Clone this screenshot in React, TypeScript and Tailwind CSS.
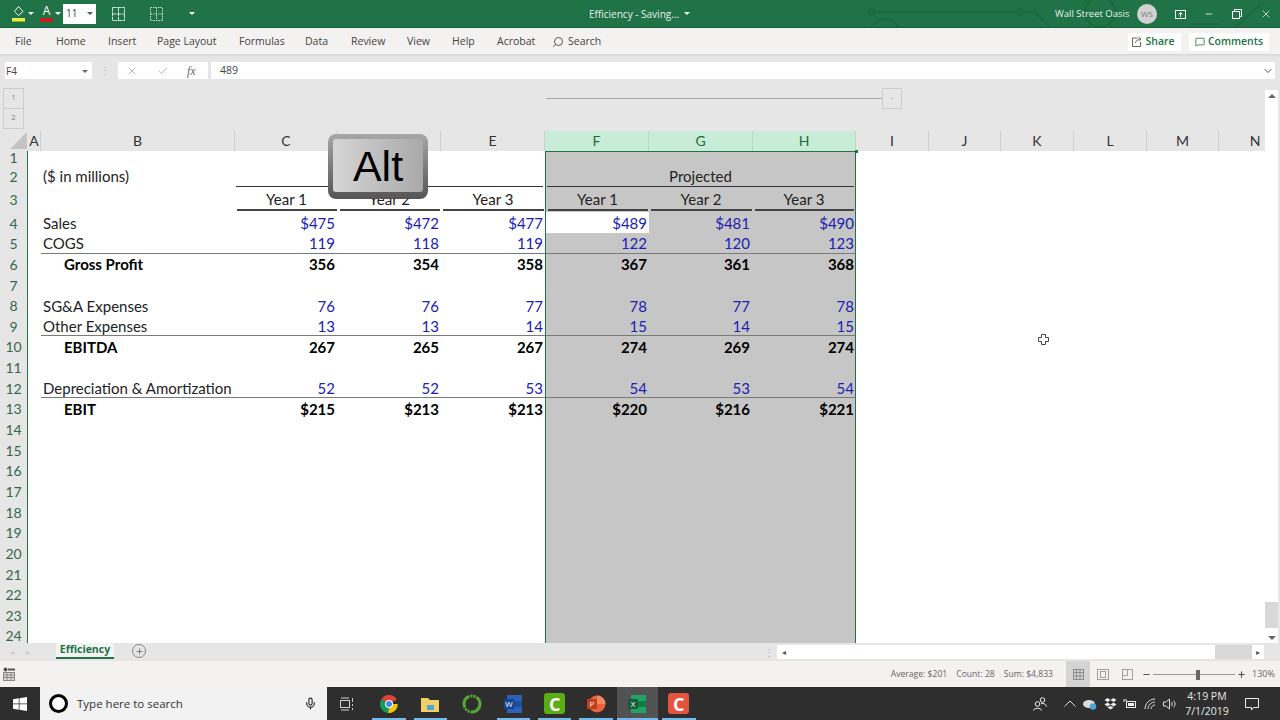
import { Search, X, Check, Minus, Plus, ChevronDown, MessageSquare, Mic } from "lucide-react";

const cols = [
    { name: "A", w: "w-[13px]" },
    { name: "B", w: "w-[194px]" },
    { name: "C", w: "w-[103px]" },
    { name: "D", w: "w-[103px]" },
    { name: "E", w: "w-[104px]" },
    { name: "F", w: "w-[104px]" },
    { name: "G", w: "w-[104px]" },
    { name: "H", w: "w-[103px]" },
    { name: "I", w: "w-[73px]" },
    { name: "J", w: "w-[72px]" },
    { name: "K", w: "w-[73px]" },
    { name: "L", w: "w-[73px]" },
    { name: "M", w: "w-[72px]" },
    { name: "N", w: "w-[73px]" },
];

type Row = {
    n: number;
    h?: string;
    label?: string;
    indent?: boolean;
    bold?: boolean;
    blue?: boolean;
    line?: boolean;
    values?: string[];
};

const rows: Row[] = [
    { n: 1, h: "h-[15px]" },
    { n: 2, h: "h-[21px]" },
    { n: 3, h: "h-[25.3px]" },
    { n: 4, label: "Sales", blue: true, values: ["$475", "$472", "$477", "$489", "$481", "$490"] },
    { n: 5, label: "COGS", blue: true, line: true, values: ["119", "118", "119", "122", "120", "123"] },
    { n: 6, label: "Gross Profit", indent: true, bold: true, values: ["356", "354", "358", "367", "361", "368"] },
    { n: 7 },
    { n: 8, label: "SG&A Expenses", blue: true, values: ["76", "76", "77", "78", "77", "78"] },
    { n: 9, label: "Other Expenses", blue: true, line: true, values: ["13", "13", "14", "15", "14", "15"] },
    { n: 10, label: "EBITDA", indent: true, bold: true, values: ["267", "265", "267", "274", "269", "274"] },
    { n: 11 },
    { n: 12, label: "Depreciation & Amortization", blue: true, line: true, values: ["52", "52", "53", "54", "53", "54"] },
    { n: 13, label: "EBIT", indent: true, bold: true, values: ["$215", "$213", "$213", "$220", "$216", "$221"] },
    { n: 14 }, { n: 15 }, { n: 16 }, { n: 17 }, { n: 18 }, { n: 19 },
    { n: 20 }, { n: 21 }, { n: 22 }, { n: 23 }, { n: 24 },
];

const valueWidths = ["w-[103px]", "w-[103px]", "w-[104px]", "w-[104px]", "w-[104px]", "w-[103px]"];
const valuePads = ["pr-[3px]", "pr-[2px]", "pr-[2px]", "pr-[2px]", "pr-[3px]", "pr-[1px]"];

const tabs = [
    { name: "File", w: "w-[41px]" },
    { name: "Home", w: "w-[52px]" },
    { name: "Insert", w: "w-[49px]" },
    { name: "Page Layout", w: "w-[82px]" },
    { name: "Formulas", w: "w-[66px]" },
    { name: "Data", w: "w-[46px]" },
    { name: "Review", w: "w-[56px]" },
    { name: "View", w: "w-[45px]" },
    { name: "Help", w: "w-[45px]" },
    { name: "Acrobat", w: "w-[55px]" },
];

function GridIcon({ dashed }: { dashed?: boolean }) {
    return (
        <svg width="13" height="14" viewBox="0 0 13 14" fill="none" stroke="#cfe0d6" strokeWidth="1" strokeDasharray={dashed ? "1.5 1" : "4 0.6"}>
            <rect x="0.5" y="0.5" width="12" height="13" />
            <path d="M6.5 0.5V13.5M0.5 7H12.5" />
        </svg>
    );
}

function Caret({ color = "border-t-white" }: { color?: string }) {
    return <div className={`h-0 w-0 border-x-[3px] border-t-[3px] border-x-transparent ${color}`} />;
}

function TitleBar() {
    return (
        <div className="relative flex h-[28px] items-center overflow-hidden border-b border-[#17603a] bg-[#1f7346] text-[10px] text-[#e8f1ec]">
            <svg className="absolute left-[860px] top-0" width="420" height="28" viewBox="0 0 420 28" fill="none" stroke="#1a6a3e" strokeWidth="2">
                <path d="M12 12H160L175 12L190 27" />
                <circle cx="12" cy="12" r="3" />
                <circle cx="160" cy="12" r="3" />
                <circle cx="25" cy="34" r="15" />
                <circle cx="240" cy="12" r="15" />
                <path d="M375 27L400 5M330 24H360" />
            </svg>
            <svg width="13" height="17" viewBox="0 0 13 17" className="relative ml-[12px]" fill="none">
                <path d="M6.5 1.5L11 6.5L6.5 10.5L2.5 6.5Z" stroke="#fff" strokeWidth="1" />
                <rect x="0" y="13" width="13" height="3.5" fill="#ecec3c" />
            </svg>
            <div className="relative ml-[3px]"><Caret /></div>
            <div className="relative ml-[6px] flex h-[17px] w-[13px] flex-col items-center justify-between">
                <span className="text-[12px] leading-[12px] text-white">A</span>
                <div className="h-[4px] w-[13px] bg-[#c81e1e]" />
            </div>
            <div className="relative ml-[2px]"><Caret /></div>
            <div className="relative ml-[2px] flex h-[20px] w-[33px] items-center justify-between bg-white pl-[3px] pr-[3px] text-[#444]">
                <span className="text-[10px]">11</span>
                <Caret color="border-t-[#555]" />
            </div>
            <div className="relative ml-[16px]"><GridIcon /></div>
            <div className="relative ml-[25px]"><GridIcon dashed /></div>
            <div className="relative ml-[26px]"><Caret /></div>
            <div className="relative ml-[394px] flex items-center gap-[5px] whitespace-nowrap leading-[12px]">
                <span>Efficiency  -  Saving...</span>
                <Caret />
            </div>
            <div className="relative ml-auto flex items-center">
                <span className="w-[74px] whitespace-nowrap text-[9.5px] leading-[12px]">Wall Street Oasis</span>
                <div className="ml-[8px] flex h-[20px] w-[20px] items-center justify-center rounded-full bg-[#d2d2d2] text-[8px] text-[#777]">WS</div>
                <svg className="ml-[18px]" width="11" height="10" viewBox="0 0 11 10" fill="none" stroke="#fff">
                    <rect x="0.5" y="1.5" width="10" height="8" />
                    <path d="M5.5 8V3.5M3.5 5.5L5.5 3.5L7.5 5.5M0.5 1.5H10.5" />
                </svg>
                <Minus size={10} className="ml-[18px]" />
                <svg className="ml-[18px]" width="10" height="10" viewBox="0 0 10 10" fill="none" stroke="#fff">
                    <rect x="0.5" y="2.5" width="7" height="7" />
                    <path d="M2.5 2.5V0.5H9.5V7.5H7.5" />
                </svg>
                <X size={12} strokeWidth={1.5} className="ml-[18px] mr-[8px]" />
            </div>
        </div>
    );
}

function RibbonTabs() {
    return (
        <div className="flex h-[26px] items-center bg-[#f3f2f1] pl-[15px] pt-[1px] text-[10.5px] text-[#444]">
            {tabs.map((t) => (
                <span key={t.name} className={`${t.w} whitespace-nowrap`}>{t.name}</span>
            ))}
            <Search size={12} className="-scale-x-100 text-[#555]" />
            <span className="ml-[4px]">Search</span>
            <div className="ml-auto mr-[11px] flex items-center gap-[8px] text-[10.5px] font-semibold text-[#217346]">
                <div className="flex h-[18px] w-[53px] items-center justify-center gap-[3px] bg-white pr-[2px]">
                    <svg width="10" height="11" viewBox="0 0 10 11" fill="none" stroke="#666">
                        <path d="M5.5 2H0.5V10.5H8.5V6M3.5 7C4 4.5 6 3 8 3M6.5 1L9 3L6.5 5" />
                    </svg>
                    <span>Share</span>
                </div>
                <div className="flex h-[18px] w-[80px] items-center justify-center gap-[3px] bg-white">
                    <MessageSquare size={10} className="text-[#217346]" />
                    <span>Comments</span>
                </div>
            </div>
        </div>
    );
}

function FormulaBar() {
    return (
        <div className="flex h-[25px] items-end bg-[#e6e6e6] text-[10px] text-[#444] shadow-[inset_0_3px_3px_-2px_#cfcfcf]">
            <div className="ml-[5px] flex h-[17px] w-[87px] items-center justify-between bg-white pl-[1px] pr-[4px] pt-[1px]">
                <span>F4</span>
                <Caret color="border-t-[#666]" />
            </div>
            <span className="flex h-[17px] w-[26px] items-center justify-center text-[#aaa]">⋮</span>
            <div className="flex h-[17px] w-[90px] items-center bg-white text-[#bbb]">
                <X size={12} className="ml-[8px]" />
                <Check size={12} className="ml-[19px]" />
                <span className="ml-[18px] font-['Liberation_Serif',serif] text-[12px] italic text-[#666]">fx</span>
            </div>
            <div className="ml-[3px] flex h-[17px] w-[1064px] items-center justify-between bg-white pl-[9px] pr-[1px] pt-[1px] text-[10.5px]">
                <span>489</span>
                <ChevronDown size={12} className="text-[#555]" />
            </div>
        </div>
    );
}

function OutlineArea() {
    return (
        <div className="flex h-[52px] bg-[#e6e6e6] pt-[9px] text-[7px] text-[#777]">
            <div className="ml-[3px] flex flex-col">
                <div className="flex h-[21px] w-[21px] items-center justify-center border border-[#cdcdcd]">1</div>
                <div className="-mt-px flex h-[21px] w-[21px] items-center justify-center border border-[#cdcdcd]">2</div>
            </div>
            <div className="ml-[522px] mt-[10px] h-px w-[336px] bg-[#a8a8a8]" />
            <div className="flex h-[21px] w-[20px] items-center justify-center border border-[#cdcdcd]">-</div>
        </div>
    );
}

function ColumnHeaders() {
    return (
        <div className="flex h-[20px] bg-[#e6e6e6] font-['Lato',sans-serif] text-[14px] leading-[20px] text-[#333]">
            <div className="relative w-[28px] shrink-0">
                <div className="absolute bottom-[2px] right-[1px] h-0 w-0 border-b-[17px] border-l-[17px] border-b-[#c4c4c4] border-l-transparent" />
            </div>
            {cols.map((c) => {
                const sel = c.name === "F" || c.name === "G" || c.name === "H";
                return (
                    <div
                        key={c.name}
                        className={`${c.w} ${sel ? "bg-[#c9ecd8] text-[#1f6b42] border-[#b5dcc6]" : "border-[#d0d0d0]"} flex shrink-0 items-center justify-center border-r`}
                    >
                        {c.name}
                    </div>
                );
            })}
        </div>
    );
}

function SheetRow({ row }: { row: Row }) {
    const height = row.h ?? "h-[20.65px]";
    const lineCls = row.line ? "border-b border-b-[#7a7a7a]" : "";
    const nudge = row.n > 3 ? "pt-[2px]" : "";
    return (
        <div className={`flex ${height} leading-none`}>
            <div className={`flex w-[27px] shrink-0 items-center justify-center bg-[#e6e6e6] text-[14px] text-[#38664c] ${nudge} ${row.n === 1 ? "pb-[2px]" : ""}`}>{row.n}</div>
            <div className="w-px shrink-0 bg-[#217346]" />
            <div className="w-[13px] shrink-0 bg-white" />
            <div className={`flex w-[194px] shrink-0 items-center bg-white ${lineCls} ${nudge} ${row.indent ? "pl-[23px]" : "pl-[2px]"} ${row.bold ? "font-bold text-black" : "text-[#222]"}`}>
                {row.n === 2 ? "($ in millions)" : row.label}
            </div>
            {row.n === 2 ? <ProjectedCells /> : row.n === 3 ? <YearCells /> : <ValueCells row={row} lineCls={lineCls} nudge={nudge} />}
            <div className="flex-1 bg-white" />
        </div>
    );
}

function ProjectedCells() {
    return (
        <>
            <div className="flex w-[310px] shrink-0 items-end bg-white">
                <div className="ml-[1px] mr-[2px] h-px flex-1 bg-[#333]" />
            </div>
            <div className="flex w-[311px] shrink-0 flex-col border-x border-x-[#217346] bg-[#c6c6c6] text-[#222]">
                <span className="flex flex-1 items-center justify-center">Projected</span>
                <div className="ml-[1px] mr-px h-px bg-[#333]" />
            </div>
        </>
    );
}

function YearCells() {
    return (
        <>
            {["Year 1", "Year 2", "Year 3", "Year 1", "Year 2", "Year 3"].map((y, i) => (
                <div
                    key={i}
                    className={`${valueWidths[i]} flex shrink-0 flex-col pb-[1px] ${i >= 3 ? "bg-[#c6c6c6]" : "bg-white"} ${i === 3 ? "border-l border-l-[#217346]" : ""} ${i === 5 ? "border-r border-r-[#217346]" : ""}`}
                >
                    <span className="flex flex-1 items-center justify-center pt-[2px] text-[#222]">{y}</span>
                    <div className="ml-[2px] mr-[1px] h-[2px] bg-[#444]" />
                </div>
            ))}
        </>
    );
}

function ValueCells({ row, lineCls, nudge }: { row: Row; lineCls: string; nudge: string }) {
    const color = row.bold ? "font-bold text-black" : "text-[#2020b0]";
    return (
        <>
            {valueWidths.map((w, i) => {
                const active = row.n === 4 && i === 3;
                return (
                    <div
                        key={i}
                        className={`${w} flex shrink-0 items-center justify-end ${valuePads[i]} ${nudge} ${color} ${lineCls} ${active ? "bg-white" : i >= 3 ? "bg-[#c6c6c6]" : "bg-white"} ${row.n === 1 && i >= 3 ? "border-t border-t-[#217346]" : ""} ${i === 3 ? "border-l border-l-[#217346]" : ""} ${i === 5 ? "border-r border-r-[#217346]" : ""}`}
                    >
                        {row.values?.[i]}
                    </div>
                );
            })}
        </>
    );
}

function RightScrollbar() {
    return (
        <div className="flex w-[15px] shrink-0 justify-start bg-[#e6e6e6] pt-[11px]">
            <div className="flex w-[13px] flex-col items-center bg-white">
                <div className="mt-[4px] h-0 w-0 border-x-[4px] border-b-[4px] border-x-transparent border-b-[#666]" />
                <div className="mt-auto h-[26px] w-[13px] bg-[#d8d8d8]" />
                <div className="mb-[3px] mt-[8px] h-0 w-0 border-x-[4px] border-t-[4px] border-x-transparent border-t-[#666]" />
            </div>
        </div>
    );
}

function AltKey() {
    return (
        <div className="absolute left-[328px] top-[134px] flex h-[65px] w-[100px] rounded-[8px] bg-gradient-to-b from-[#a8a8a8] to-[#555555] px-[5px] pb-[7px] pt-[5px]">
            <div className="flex flex-1 items-center justify-center rounded-[3px] bg-gradient-to-r from-[#d6d6d6] to-[#a9a9a9]">
                <span className="mt-[2px] font-['Liberation_Sans',sans-serif] text-[43px] leading-none text-black">Alt</span>
            </div>
        </div>
    );
}

function SheetTabs() {
    return (
        <div className="flex h-[18px] items-stretch bg-[#e6e6e6] text-[#666]">
            <span className="ml-[10px] flex w-[8px] items-center text-[8px] text-[#ccc]">◂</span>
            <span className="ml-[8px] flex w-[8px] items-center text-[8px] text-[#ccc]">▸</span>
            <div className="ml-[22px] flex h-[16px] w-[58px] items-center justify-center border-b-2 border-[#217346] bg-[#f3f3f3] text-[10.5px] font-bold text-[#217346]">Efficiency</div>
            <div className="ml-[18px] mt-[1px] flex h-[14px] w-[14px] items-center justify-center rounded-full border border-[#888]">
                <Plus size={9} className="text-[#666]" />
            </div>
            <span className="ml-[618px] flex w-[6px] items-center text-[10px] text-[#aaa]">⋮</span>
            <div className="ml-[7px] mt-[2px] flex h-[14px] items-center">
                <span className="flex h-[14px] w-[13px] items-center justify-center bg-white text-[8px] text-[#555]">◂</span>
                <div className="h-[14px] w-[425px] bg-white" />
                <div className="h-[14px] w-[37px] bg-[#d8d8d8]" />
                <span className="flex h-[14px] w-[12px] items-center justify-center bg-white text-[8px] text-[#555]">▸</span>
            </div>
        </div>
    );
}

function StatusBar() {
    return (
        <div className="flex h-[26px] items-center whitespace-nowrap bg-[#f3f2f1] text-[8.6px] text-[#666]">
            <svg className="ml-[3px]" width="12" height="14" viewBox="0 0 12 14" fill="none">
                <circle cx="2.5" cy="2.5" r="2" fill="#555" />
                <rect x="5" y="1.5" width="7" height="2" fill="#555" />
                <rect x="0.5" y="5.5" width="11" height="8" fill="#ddd" stroke="#888" />
                <path d="M0.5 8H11.5M0.5 10.5H11.5M4 5.5V13.5M8 5.5V13.5" stroke="#888" />
            </svg>
            <div className="flex w-[1051px] justify-end gap-[9px] pr-[13px]">
                <span>Average: $201</span>
                <span>Count: 28</span>
                <span>Sum: $4,833</span>
            </div>
            <div className="flex h-[26px] w-[24px] items-center justify-center bg-[#d4d4d4]">
                <svg width="11" height="11" viewBox="0 0 11 11" fill="none" stroke="#8a8a8a"><rect x="0.5" y="0.5" width="10" height="10" /><path d="M0.5 3.5H10.5M0.5 7H10.5M3.5 0.5V10.5M7 0.5V10.5" /></svg>
            </div>
            <svg className="ml-[7px]" width="12" height="11" viewBox="0 0 12 11" fill="none" stroke="#a0a0a0"><rect x="0.5" y="0.5" width="11" height="10" /><rect x="3.5" y="2.5" width="5" height="6" /></svg>
            <svg className="ml-[13px]" width="11" height="11" viewBox="0 0 11 11" fill="none" stroke="#a0a0a0"><rect x="0.5" y="0.5" width="10" height="10" /><path d="M0.5 6.5H5.5V0.5" /></svg>
            <Minus size={9} className="ml-[9px] text-[#555]" strokeWidth={3} />
            <div className="relative ml-[2px] h-px w-[82px] bg-[#999]">
                <div className="absolute left-[43px] top-[-4px] h-[10px] w-[4px] bg-[#666]" />
            </div>
            <Plus size={9} className="ml-[2px] text-[#555]" strokeWidth={3} />
            <span className="ml-[6px] text-[9px]">130%</span>
        </div>
    );
}

function TaskIcon({ open, active, children }: { open?: boolean; active?: boolean; children: React.ReactNode }) {
    return (
        <div className={`relative flex w-[41.4px] items-center justify-center ${active ? "bg-[#525252]" : ""}`}>
            {children}
            {open && <div className={`absolute bottom-0 h-[2px] bg-[#76b9ed] ${active ? "left-0 right-0" : "left-[4px] right-[4px]"}`} />}
        </div>
    );
}

function ChromeIcon() {
    return (
        <svg width="18" height="18" viewBox="0 0 18 18">
            <path d="M9 9L1.2 4.5A9 9 0 0 1 16.8 4.5Z" fill="#db4437" />
            <path d="M9 9H17.9A9 9 0 0 1 8 18Z" fill="#f4c20d" />
            <path d="M9 9L8 18A9 9 0 0 1 1.2 4.5Z" fill="#0f9d58" />
            <circle cx="9" cy="9" r="4" fill="#fff" />
            <circle cx="9" cy="9" r="3" fill="#4285f4" />
        </svg>
    );
}

function Taskbar() {
    return (
        <div className="flex h-[33px] items-stretch bg-[#2e2e2e] text-white">
            <div className="flex w-[40px] items-center justify-center">
                <svg width="14" height="14" viewBox="0 0 14 14" fill="#fff">
                    <path d="M0 2.2L5.8 1.3V6.6H0ZM6.5 1.2L14 0V6.6H6.5ZM0 7.3H5.8V12.7L0 11.8ZM6.5 7.3H14V14L6.5 12.8Z" />
                </svg>
            </div>
            <div className="flex w-[287px] items-center bg-[#f2f2f2] text-[11.5px] text-[#333]">
                <div className="ml-[9px] h-[19px] w-[19px] rounded-full border-[3px] border-black bg-white" />
                <span className="ml-[9px]">Type here to search</span>
                <Mic size={13} className="ml-auto mr-[10px] text-[#222]" />
            </div>
            <TaskIcon>
                <svg width="16" height="14" viewBox="0 0 16 14" fill="none" stroke="#ccc">
                    <rect x="0.5" y="3.5" width="9" height="7" />
                    <path d="M1 1H9M1 13H9M12.5 1V5M12.5 7V9M12.5 11V13" />
                </svg>
            </TaskIcon>
            <TaskIcon open><ChromeIcon /></TaskIcon>
            <TaskIcon open>
                <svg width="18" height="16" viewBox="0 0 18 16"><path d="M0 2H7L9 4H18V16H0Z" fill="#f4cf66" /><rect x="6" y="9" width="7" height="5" fill="#4aa8d8" /></svg>
            </TaskIcon>
            <TaskIcon>
                <svg width="20" height="20" viewBox="0 0 20 20" fill="none"><circle cx="10" cy="10" r="8" stroke="#57a836" strokeWidth="3" strokeDasharray="14 1 2 1 2 1" /></svg>
            </TaskIcon>
            <TaskIcon open>
                <svg width="20" height="20" viewBox="0 0 20 20"><rect x="4" y="1" width="15" height="18" fill="#2b62b8" /><rect x="4" y="7" width="15" height="6" fill="#1c4da0" /><rect x="1" y="5" width="10" height="10" fill="#15438f" /><text x="6" y="13" fontSize="8" fill="#fff" textAnchor="middle">W</text></svg>
            </TaskIcon>
            <TaskIcon open>
                <div className="flex h-[21px] w-[21px] items-center justify-center rounded-[3px] bg-[#5bac16]">
                    <span className="text-[18px] font-bold leading-none">C</span>
                </div>
            </TaskIcon>
            <TaskIcon open>
                <svg width="20" height="20" viewBox="0 0 20 20"><circle cx="11" cy="10" r="8.5" fill="#e8633e" /><path d="M11 1.5A8.5 8.5 0 0 1 19.5 10H11Z" fill="#f08a5e" /><rect x="1" y="5" width="10" height="10" fill="#c43e1c" /><text x="6" y="13" fontSize="8" fill="#fff" textAnchor="middle">P</text></svg>
            </TaskIcon>
            <TaskIcon open active>
                <svg width="20" height="20" viewBox="0 0 20 20"><rect x="4" y="1" width="15" height="18" fill="#21a366" /><rect x="11" y="7" width="8" height="6" fill="#107c41" /><rect x="1" y="5" width="10" height="10" fill="#185c37" /><text x="6" y="13" fontSize="8" fill="#fff" textAnchor="middle">X</text></svg>
            </TaskIcon>
            <TaskIcon open>
                <div className="flex h-[21px] w-[21px] items-center justify-center rounded-[3px] bg-[#e5533d]">
                    <span className="text-[18px] font-bold leading-none">C</span>
                </div>
            </TaskIcon>
            <Tray />
        </div>
    );
}

function Tray() {
    const cell = "flex w-[20px] items-center justify-center";
    return (
        <div className="ml-auto flex items-stretch text-[#e6e6e6]">
            <div className={cell}>
                <svg width="14" height="14" viewBox="0 0 14 14" fill="none" stroke="#eee">
                    <circle cx="4.5" cy="7" r="2.3" /><path d="M0.5 13.5C1 10.5 8 10.5 8.5 13.5" />
                    <circle cx="9.5" cy="3" r="2.3" /><path d="M8 6.5C10 6 13 7 13.5 9.5" />
                </svg>
            </div>
            <div className="w-[10px]" />
            <div className={cell}>
                <svg width="12" height="7" viewBox="0 0 12 7" fill="none" stroke="#ddd"><path d="M0.5 6.5L6 1L11.5 6.5" /></svg>
            </div>
            <div className={cell}>
                <svg width="14" height="12" viewBox="0 0 14 12"><ellipse cx="6" cy="6" rx="6" ry="4" fill="#ddd" /><circle cx="10" cy="8.5" r="3.3" fill="#4aa8d8" /></svg>
            </div>
            <div className={cell}>
                <svg width="13" height="12" viewBox="0 0 13 12" fill="#eee"><path d="M3.5 0L6.5 2L3.5 4L0.5 2ZM9.5 0L12.5 2L9.5 4L6.5 2ZM3.5 4.5L6.5 6.5L3.5 8.5L0.5 6.5ZM9.5 4.5L12.5 6.5L9.5 8.5L6.5 6.5ZM3.5 9.5L6.5 8L9.5 9.5L6.5 11.5Z" /></svg>
            </div>
            <div className={cell}>
                <svg width="14" height="11" viewBox="0 0 14 11" fill="none" stroke="#eee"><rect x="3.5" y="3.5" width="9" height="6" /><rect x="5" y="5" width="6" height="3" fill="#eee" stroke="none" /><path d="M1 1V4M3 1V3" /></svg>
            </div>
            <div className={cell}>
                <svg width="13" height="12" viewBox="0 0 13 12" fill="none" stroke="#ddd"><path d="M1 11C1 5.5 5.5 1 11 1M4 11C4 7.2 7.2 4 11 4M7 11C7 8.8 8.8 7 11 7" /></svg>
            </div>
            <div className={cell}>
                <svg width="14" height="12" viewBox="0 0 14 12" fill="none" stroke="#ddd"><path d="M0.5 4H3L6.5 1V11L3 8H0.5ZM8.5 4C9.5 5 9.5 7 8.5 8M10.5 2.5C12.5 4.5 12.5 7.5 10.5 9.5" /></svg>
            </div>
            <div className="flex w-[54px] flex-col items-center justify-center text-[10.5px] leading-[15px]">
                <span>4:19 PM</span>
                <span>7/1/2019</span>
            </div>
            <div className="flex w-[36px] items-center justify-center">
                <svg width="14" height="14" viewBox="0 0 14 14" fill="none" stroke="#eee"><path d="M0.5 1.5H13.5V10.5H8.5L6.5 13V10.5H0.5Z" /></svg>
            </div>
            <div className="w-[10px]" />
        </div>
    );
}

export default function App() {
    return (
        <div className="relative h-[720px] w-[1280px] overflow-hidden bg-white font-['Open_Sans','Noto_Sans',sans-serif]">
            <TitleBar />
            <RibbonTabs />
            <FormulaBar />
            <div className="flex h-[564px]">
                <div className="w-[1265px] shrink-0 overflow-hidden">
                    <OutlineArea />
                    <ColumnHeaders />
                    <div className="h-[492px] overflow-hidden font-['Lato',sans-serif] text-[15px]">
                        {rows.map((r) => (
                            <SheetRow key={r.n} row={r} />
                        ))}
                    </div>
                </div>
                <RightScrollbar />
            </div>
            <SheetTabs />
            <StatusBar />
            <Taskbar />
            <AltKey />
            <div className="absolute left-[855px] top-[150px] h-[3px] w-[3px] bg-[#217346]" />
            <svg className="absolute left-[1038px] top-[334px]" width="11" height="11" viewBox="0 0 11 11" fill="#fff" stroke="#444">
                <path d="M3.5 0.5H7.5V3.5H10.5V7.5H7.5V10.5H3.5V7.5H0.5V3.5H3.5Z" />
            </svg>
        </div>
    );
}
